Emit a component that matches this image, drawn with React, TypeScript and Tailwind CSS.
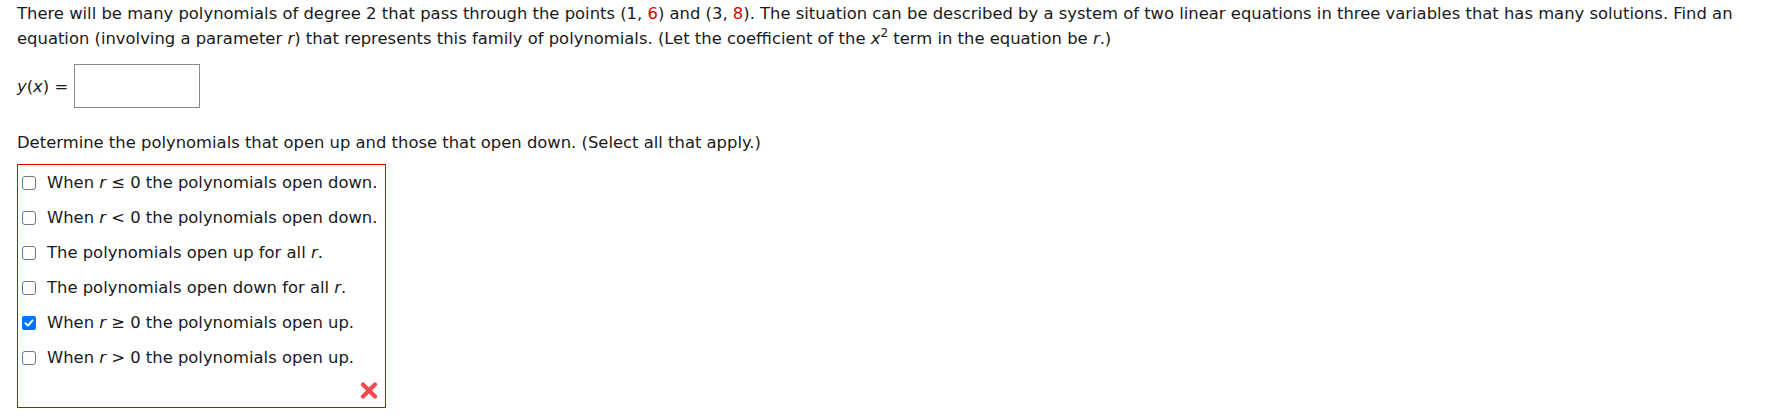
import React from "react";

const options: { pre: string; post: string; checked: boolean }[] = [
  { pre: "When ", post: " ≤ 0 the polynomials open down.", checked: false },
  { pre: "When ", post: " < 0 the polynomials open down.", checked: false },
  { pre: "The polynomials open up for all ", post: ".", checked: false },
  { pre: "The polynomials open down for all ", post: ".", checked: false },
  { pre: "When ", post: " ≥ 0 the polynomials open up.", checked: true },
  { pre: "When ", post: " > 0 the polynomials open up.", checked: false },
];

function Box({ checked }: { checked: boolean }) {
  if (checked) {
    return (
      <span className="flex h-[14px] w-[14px] items-center justify-center rounded-[2px] bg-[#0075ff]">
        <svg width="10" height="10" viewBox="0 0 10 10">
          <path d="M1.5 5.2 L4 7.6 L8.6 2.4" fill="none" stroke="white" strokeWidth="1.9" strokeLinecap="round" strokeLinejoin="round" />
        </svg>
      </span>
    );
  }
  return <span className="block h-[14px] w-[14px] rounded-[3px] border border-[#767676] bg-white" />;
}

export default function App() {
  return (
    <div
      className="bg-white pl-[17px] pt-[1px] text-[16.4px] leading-[25px] text-[#1a1a1a]"
      style={{ fontFamily: '"DejaVu Sans", Verdana, sans-serif' }}
    >
      <p>
        There will be many polynomials of degree 2 that pass through the points (1, <span className="text-[#e00000]">6</span>) and (3,{" "}
        <span className="text-[#e00000]">8</span>). The situation can be described by a system of two linear equations in three variables that has many solutions. Find an
        <br />
        equation (involving a parameter <i>r</i>) that represents this family of polynomials. (Let the coefficient of the <i>x</i>
        <sup className="relative top-[-1px] align-super text-[12px] leading-none">2</sup> term in the equation be <i>r</i>.)
      </p>
      <div className="mt-[13px] flex items-center">
        <span>
          <i>y</i>(<i>x</i>) =
        </span>
        <div className="ml-[6px] h-[44px] w-[126px] border border-[#8a8a8a] bg-white" />
      </div>
      <p className="mt-[22px]">Determine the polynomials that open up and those that open down. (Select all that apply.)</p>
      <div className="mt-[9px] flex w-[369px] flex-col border border-[#dd0000] pb-[8px] pt-0">
        {options.map((o, i) => (
          <div key={i} className="flex h-[35px] items-center">
            <span className="ml-[4px] mr-[11px]">
              <Box checked={o.checked} />
            </span>
            <span>
              {o.pre}
              <i>r</i>
              {o.post}
            </span>
          </div>
        ))}
        <div className="flex justify-end pr-[7px] pt-[7px]">
          <svg width="18" height="17" viewBox="0 0 18 17">
            <path d="M3 2.5 L15 14.5 M15 2.5 L3 14.5" stroke="#f5484f" strokeWidth="4.2" strokeLinecap="round" />
          </svg>
        </div>
      </div>
    </div>
  );
}
